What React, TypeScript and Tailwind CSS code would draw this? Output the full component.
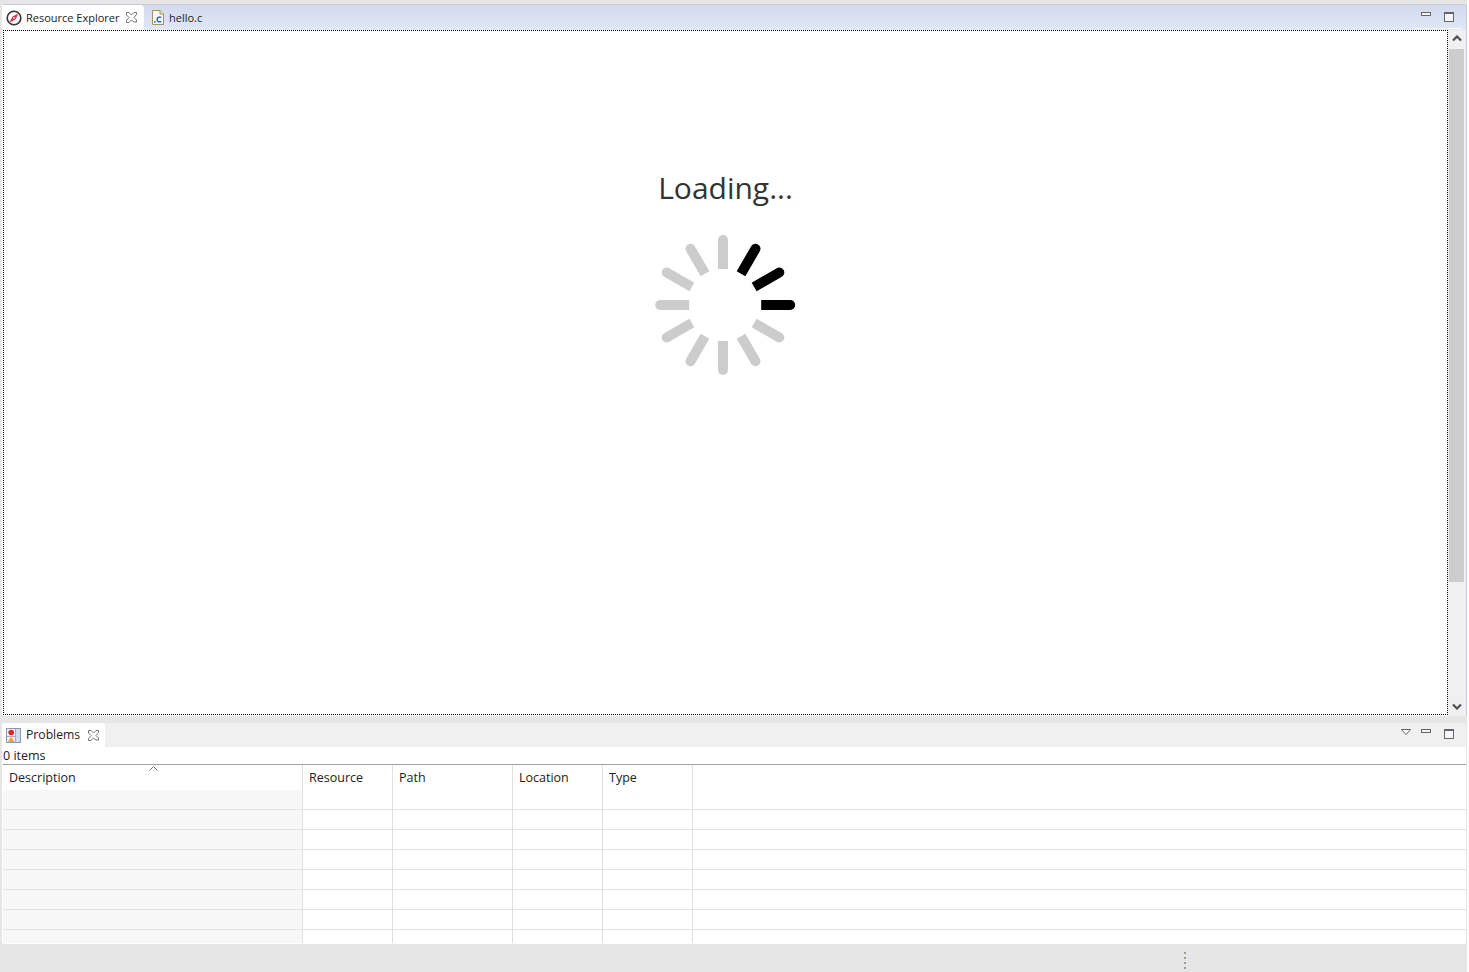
const columns = [
  { label: "Description", width: "w-[300px]" },
  { label: "Resource", width: "w-[90px]" },
  { label: "Path", width: "w-[120px]" },
  { label: "Location", width: "w-[90px]" },
  { label: "Type", width: "w-[90px]" },
];

const rows = [
  "h-[20px] border-b border-[#e3e3e3]",
  "h-[20px] border-b border-[#e3e3e3]",
  "h-[20px] border-b border-[#e3e3e3]",
  "h-[20px] border-b border-[#e3e3e3]",
  "h-[20px] border-b border-[#e3e3e3]",
  "h-[20px] border-b border-[#e3e3e3]",
  "h-[20px] border-b border-[#e3e3e3]",
  "h-[13px]",
];
const spokes = [0, 30, 60, 90, 120, 150, 180, 210, 240, 270, 300, 330];

function CloseIcon() {
  return (
    <svg width="11" height="11" viewBox="0 0 11 11" className="shrink-0">
      <path
        d="M1 .5h2L5.500 3 8 .5h2.500v2L8 5.500l2.500 2.500v2H8L5.500 8 3 10.500H.5v-2L3 5.500.5 3V.5z"
        fill="none"
        stroke="#757575"
      />
    </svg>
  );
}

function CompassIcon() {
  return (
    <svg width="16" height="16" viewBox="0 0 16 16" className="shrink-0">
      <circle cx="8" cy="8" r="6.800" fill="#fff" stroke="#333" strokeWidth="1.600" />
      <path d="M12.500 3.500 9.500 9.500 6.500 6.500z" fill="#e8324a" />
      <path d="M3.500 12.500 6.500 6.500 9.500 9.500z" fill="#c9344a" />
      <circle cx="8" cy="8" r="1" fill="#f6c9cf" />
    </svg>
  );
}

function FileCIcon() {
  return (
    <svg width="12" height="15" viewBox="0 0 12 15" className="shrink-0">
      <path d="M.5.500h7.500l3.500 3.500v10.500H.5z" fill="#f7f7ef" stroke="#a8905c" />
      <path d="M8 .5v3.500h3.500" fill="#efe4c0" stroke="#a8905c" />
      <rect x="2" y="11" width="1.500" height="1.500" fill="#2f6aa8" />
      <path d="M9.200 7.200H6.900Q5.200 7.200 5.200 9.500t1.700 2.300h2.300" fill="none" stroke="#2f6aa8" strokeWidth="1.400" />
    </svg>
  );
}

function ProblemsIcon() {
  return (
    <svg width="15" height="15" viewBox="0 0 15 15" className="shrink-0">
      <rect x=".5" y=".5" width="14" height="14" fill="#eef1f6" stroke="#8b98ae" />
      <rect x="10" y="1" width="4" height="13" fill="#cfdcee" />
      <path d="M9.500 1v13M1 8.500h8.500" stroke="#a3b0c4" />
      <circle cx="5.200" cy="4.500" r="2.800" fill="#e0252c" />
      <path d="M5.200 8.500 8.500 14h-6.600z" fill="#f5a623" />
    </svg>
  );
}

function MinimizeIcon() {
  return <span className="block h-[4px] w-[10px] border border-[#666] bg-[#f4f4f4]" />;
}

function MaximizeIcon() {
  return <span className="block h-[10px] w-[10px] border border-[#666] border-t-[2px] bg-[#f4f6fb]" />;
}

function Spinner() {
  return (
    <svg width="146" height="142" viewBox="-73 -71 146 142" className="block">
      {spokes.map((angle) => (
        <path
          key={angle}
          d="M-5 -36V-65A5 5 0 0 1 5 -65V-36Z"
          transform={`translate(${angle === 90 || angle === 270 ? 2.2 : 0} 0) rotate(${angle})`}
          fill={angle >= 30 && angle <= 90 ? "#000000" : "#cccccc"}
        />
      ))}
    </svg>
  );
}

export default function App() {
  return (
    <div className="h-[972px] w-[1469px] overflow-hidden bg-white font-['Open_Sans','Noto_Sans',sans-serif] text-[#222]">
      <div className="flex h-full w-[1467px] flex-col bg-[#e6e6e6] pl-[2px] pt-[4px]">
        {/* Editor area */}
        <div className="flex h-[712px] flex-col rounded-t-[3px] border-t border-r border-[#c5cbdb] bg-white">
          <div className="relative flex h-[25px] items-stretch bg-gradient-to-b from-[#d3daec] to-[#e0e7f6] text-[11px]">
            <div className="flex w-[142px] items-center gap-[4px] rounded-tr-[4px] bg-white pl-[4px]">
              <CompassIcon />
              <span className="mt-px w-[96px] whitespace-nowrap">Resource Explorer</span>
              <CloseIcon />
            </div>
            <div className="flex items-center gap-[5px] pl-[8px]">
              <FileCIcon />
              <span className="mt-px">hello.c</span>
            </div>
            <div className="ml-auto flex items-start gap-[13px] pr-[12px] pt-[7px]">
              <MinimizeIcon />
              <MaximizeIcon />
            </div>
            <div className="absolute bottom-px right-[5px] h-px w-[46px] bg-white" />
          </div>
          <div className="flex flex-1">
            <div className="mb-px ml-px flex flex-1 flex-col items-center border border-dotted border-black">
              <div className="mt-[137px] text-[30px] leading-[40px] text-[#333]">Loading...</div>
              <div className="mr-[6px] mt-[26px]">
                <Spinner />
              </div>
            </div>
            <div className="flex w-[18px] flex-col bg-[#f0f0f0] pl-px">
              <svg width="10" height="7" viewBox="0 0 10 7" className="mb-[7px] ml-[3px] mt-[5px]">
                <path d="M1 5.500 5 1.500l4 4" fill="none" stroke="#505050" strokeWidth="2.200" />
              </svg>
              <div className="h-[533px] w-[15px] bg-[#cdcdcd]" />
              <svg width="10" height="7" viewBox="0 0 10 7" className="ml-[3px] mt-[121px]">
                <path d="M1 1.500 5 5.500l4-4" fill="none" stroke="#505050" strokeWidth="2.200" />
              </svg>
            </div>
          </div>
        </div>

        {/* Problems view */}
        <div className="mr-px mt-[7px] flex h-[221px] flex-col overflow-hidden rounded-t-[3px] rounded-b-[2px] bg-white">
          <div className="flex h-[24px] bg-[#f0f0f0]">
            <div className="flex w-[103px] items-center gap-[5px] rounded-tr-[3px] bg-white pl-[4px]">
              <ProblemsIcon />
              <span className="mt-px w-[57px] text-[12.200px]">Problems</span>
              <CloseIcon />
            </div>
            <div className="ml-auto flex items-start pr-[12px] pt-[6px]">
              <svg width="10" height="6" viewBox="0 0 10 6" className="mr-[10px]">
                <path d="M.5.500h9L5 5.500z" fill="#fff" stroke="#666" />
              </svg>
              <span className="mr-[13px]">
                <MinimizeIcon />
              </span>
              <MaximizeIcon />
            </div>
          </div>
          <div className="h-[17px] pl-px text-[12.500px] leading-[18px]">0 items</div>
          <div className="ml-px flex-1 border-t border-[#a0a0a0]">
            <div className="relative flex h-[25px]">
              {columns.map((col) => (
                <div
                  key={col.label}
                  className={`${col.width} border-r border-[#e0e0e0] pl-[6px] pt-[4px] text-[12.500px] leading-[18px]`}
                >
                  {col.label}
                </div>
              ))}
              <svg width="9" height="5" viewBox="0 0 9 5" className="absolute left-[146px] top-px">
                <path d="M.5 4.500 4.500.5l4 4" fill="none" stroke="#777" />
              </svg>
            </div>
            {rows.map((row, index) => (
              <div key={index} className={`flex ${row}`}>
                {columns.map((col, colIndex) => (
                  <div
                    key={col.label}
                    className={`${col.width} border-r border-[#e0e0e0] ${colIndex === 0 ? "bg-[#f7f7f7]" : ""}`}
                  />
                ))}
              </div>
            ))}
          </div>
        </div>

        {/* Status bar */}
        <div className="flex flex-1 items-center justify-end pr-[281px]">
          <div className="mt-[4px] flex flex-col gap-[3px]">
            {[0, 1, 2, 3].map((dot) => (
              <span key={dot} className="block h-[2px] w-[2px] bg-[#a09a90]" />
            ))}
          </div>
        </div>
      </div>
    </div>
  );
}
